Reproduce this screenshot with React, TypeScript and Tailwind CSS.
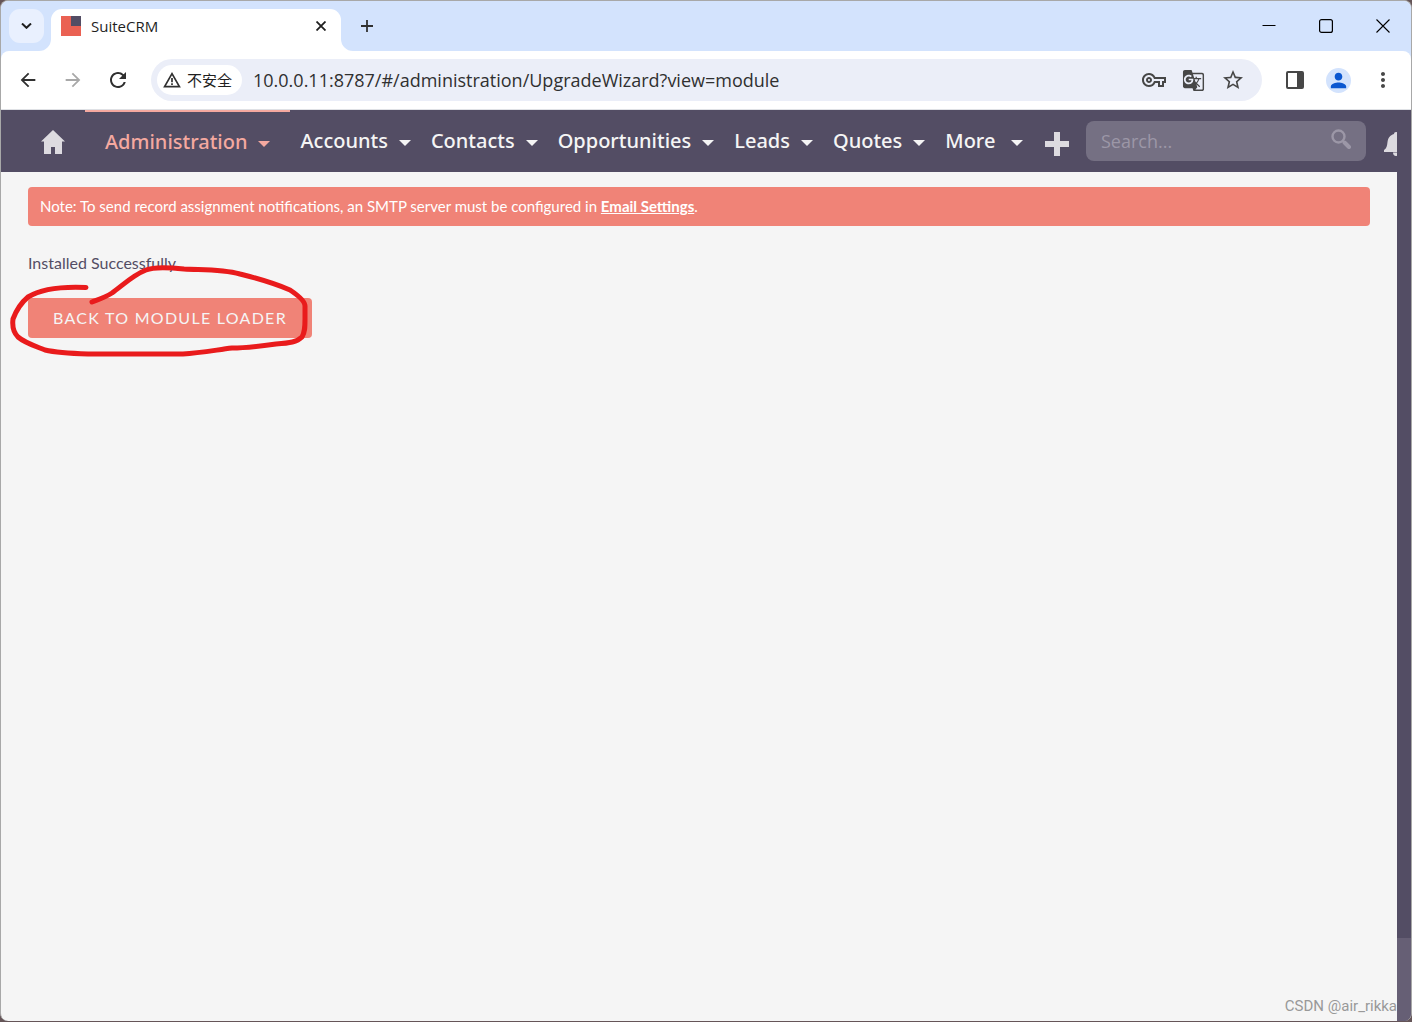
import {
  MdArrowBack,
  MdArrowForward,
  MdGTranslate,
  MdMoreVert,
  MdOutlineVpnKey,
  MdPerson,
  MdRefresh,
  MdStarBorder,
} from "react-icons/md"

const modules = ["Accounts", "Contacts", "Opportunities", "Leads", "Quotes"]

function Caret() {
  return (
    <svg className="mt-1 h-[6px] w-[12px] shrink-0" viewBox="0 0 12 6" fill="currentColor">
      <path d="M0 0h12L6 6z" />
    </svg>
  )
}

function TabStrip() {
  return (
    <div className="flex h-[50px] items-start bg-[#d3e3fd] pl-2 pt-2">
      <button
        aria-label="Search tabs"
        className="flex h-[34px] w-[35px] items-center justify-center rounded-[11px] bg-[#e9f0fe]"
      >
        <svg className="h-[6px] w-[11px]" viewBox="0 0 11 6" fill="none" stroke="#1f1f1f" strokeWidth="2">
          <path d="M1 0.5l4.5 4.3L10 0.5" />
        </svg>
      </button>
      <div className="relative ml-[7px] flex h-[42px] w-[290px] items-center rounded-t-[11px] bg-white pb-2 pl-[10px] pr-[15px]">
        <svg className="absolute -left-3 bottom-0 h-3 w-3" viewBox="0 0 12 12" fill="#fff">
          <path d="M12 0v12H0A12 12 0 0 0 12 0z" />
        </svg>
        <svg className="absolute -right-3 bottom-0 h-3 w-3" viewBox="0 0 12 12" fill="#fff">
          <path d="M0 0v12h12A12 12 0 0 1 0 0z" />
        </svg>
        <svg className="h-5 w-5" viewBox="0 0 20 20">
          <path fill="#ea6153" d="M0 0h20v20H0z" />
          <path fill="#534d64" d="M10 0h10v10H10z" />
        </svg>
        <span className="ml-[10px] text-[15px] leading-5 text-[#1f1f1f]">SuiteCRM</span>
        <button aria-label="Close tab" className="ml-auto">
          <svg className="h-[10px] w-[10px]" viewBox="0 0 10 10" stroke="#1f1f1f" strokeWidth="1.8">
            <path d="M0.5 0.5l9 9M9.5 0.5l-9 9" />
          </svg>
        </button>
      </div>
      <button aria-label="New tab" className="ml-5 mt-[11px]">
        <svg className="h-3 w-3" viewBox="0 0 12 12" stroke="#303030" strokeWidth="1.8">
          <path d="M6 0v12M0 6h12" />
        </svg>
      </button>
      <div className="ml-auto flex h-[34px] items-center gap-[43px] pr-[21px] text-black">
        <button aria-label="Minimize">
          <svg className="h-[14px] w-[14px]" viewBox="0 0 14 14" stroke="currentColor">
            <path d="M0.5 6.5h13" />
          </svg>
        </button>
        <button aria-label="Maximize">
          <svg className="h-[14px] w-[14px]" viewBox="0 0 14 14" fill="none" stroke="currentColor" strokeWidth="1.2">
            <rect x="0.6" y="0.6" width="12.8" height="12.8" rx="2" />
          </svg>
        </button>
        <button aria-label="Close window">
          <svg className="h-[14px] w-[14px]" viewBox="0 0 14 14" stroke="currentColor" strokeWidth="1.1">
            <path d="M0.5 0.5l13 13M13.5 0.5l-13 13" />
          </svg>
        </button>
      </div>
    </div>
  )
}

function AddressBar() {
  return (
    <div className="bg-[#d3e3fd]">
      <div className="flex h-[59px] items-center rounded-t-lg border-b border-[#dfe1e5] bg-white px-4 text-[#474747]">
        <button aria-label="Back">
          <MdArrowBack className="h-[22px] w-[22px] text-[#303030]" />
        </button>
        <button aria-label="Forward" className="ml-[23px]">
          <MdArrowForward className="h-[22px] w-[22px] text-[#a8a8a8]" />
        </button>
        <button aria-label="Reload" className="ml-[22px]">
          <MdRefresh className="h-6 w-6 text-[#303030]" />
        </button>
        <div className="ml-[21px] flex h-[42px] flex-1 items-center rounded-full bg-[#ebeef8] pl-[6px] pr-[17px]">
          <button className="flex h-[30px] w-[85px] shrink-0 items-center rounded-full bg-white pl-[6px] text-[#1f1f1f]">
            <svg className="h-4 w-[18px]" viewBox="0 0 18 16" fill="none" stroke="#303030" strokeWidth="1.7">
              <path d="M9 1.7L16.4 14.6H1.6z" />
              <path d="M9 6v4.2M9 11.3v1.7" />
            </svg>
            <span className="ml-[6px] font-['Noto_Sans_CJK_SC',sans-serif] text-[15px] leading-5">不安全</span>
          </button>
          <input
            aria-label="Address"
            className="ml-[11px] min-w-0 flex-1 bg-transparent text-lg leading-6 text-[#303030] outline-none"
            defaultValue="10.0.0.11:8787/#/administration/UpgradeWizard?view=module"
          />
          <div className="flex items-center gap-4">
            <button aria-label="Passwords">
              <MdOutlineVpnKey className="h-6 w-6" />
            </button>
            <button aria-label="Translate">
              <MdGTranslate className="h-[23px] w-[23px]" />
            </button>
            <button aria-label="Bookmark">
              <MdStarBorder className="h-6 w-6" />
            </button>
          </div>
        </div>
        <button aria-label="Side panel" className="ml-6">
          <svg className="h-[18px] w-[18px]" viewBox="0 0 18 18">
            <rect x="1" y="1" width="16" height="16" rx="1" fill="none" stroke="#474747" strokeWidth="2" />
            <path fill="#474747" d="M11 1h6v16h-6z" />
          </svg>
        </button>
        <button
          aria-label="Profile"
          className="ml-[22px] flex h-[25px] w-[25px] items-center justify-center rounded-full bg-[#d3e3fd]"
        >
          <MdPerson className="h-[23px] w-[23px] text-[#0b57d0]" />
        </button>
        <button aria-label="Menu" className="ml-5">
          <MdMoreVert className="h-6 w-6" />
        </button>
      </div>
    </div>
  )
}

function ModuleNav() {
  return (
    <nav className="flex h-[62px] items-stretch overflow-hidden bg-[#534d64] font-['Noto_Sans',sans-serif] text-xl font-medium text-[#f5f5f5]">
      <a href="#home" aria-label="Home" className="ml-10 flex items-center pt-[2px]">
        <svg className="h-6 w-6" viewBox="0 0 24 24" fill="#dddbe0">
          <path d="M12 0l12 11.5h-3V24h-7v-7h-4v7H3V11.5H0z" />
        </svg>
      </a>
      <a
        href="#administration"
        className="ml-5 flex items-center gap-[11px] border-t-2 border-[#f5a9a0] px-5 text-[#f5a9a0]"
      >
        Administration
        <Caret />
      </a>
      {modules.map((name) => (
        <a key={name} href={`#${name.toLowerCase()}`} className="flex items-center gap-[11px] px-[10px]">
          {name}
          <Caret />
        </a>
      ))}
      <button className="flex items-center gap-4 px-[10px]">
        More
        <Caret />
      </button>
      <button aria-label="Quick create" className="ml-3 flex items-center pt-[6px]">
        <svg className="h-6 w-6" viewBox="0 0 24 24" fill="#dddbe0">
          <path d="M9 0h6v9h9v6h-9v9H9v-9H0V9h9z" />
        </svg>
      </button>
      <label className="ml-auto mr-[18px] flex h-10 w-[280px] shrink-0 items-center self-center rounded-lg bg-[#757083] px-[15px]">
        <input
          type="text"
          aria-label="Search"
          placeholder="Search..."
          className="min-w-0 flex-1 bg-transparent font-['Open_Sans',sans-serif] text-lg font-normal outline-none placeholder:text-[#9c97a7]"
        />
        <svg className="mb-1 h-5 w-5" viewBox="0 0 20 20" fill="none" stroke="#9c97a7">
          <circle cx="7.5" cy="7.5" r="6" strokeWidth="2.4" />
          <path d="M13.5 13.5l4.5 4.5" strokeWidth="4" strokeLinecap="round" />
        </svg>
      </label>
      <button aria-label="Notifications" className="mr-[14px] flex w-[13px] items-center overflow-hidden pt-[6px]">
        <svg className="h-6 w-6 shrink-0" viewBox="0 0 24 24" fill="#dddbe0">
          <path d="M12 0c1.2 0 2 .8 2 1.900C18 3 20 6 20.500 10c.4 4 1 6.500 3.500 8v2H0v-2c2.500-1.500 3.100-4 3.500-8C4 6 6 3 10 1.900 10 .8 10.800 0 12 0zM9 20.500h6c0 2-1.200 3.500-3 3.500s-3-1.500-3-3.500z" />
        </svg>
      </button>
    </nav>
  )
}

// Freehand pen stroke drawn around the button
function PenCircle() {
  return (
    <svg
      className="pointer-events-none absolute -left-5 -top-9 h-[100px] w-[320px]"
      viewBox="0 0 320 100"
      fill="none"
      stroke="#e91b1c"
      strokeWidth="5"
      strokeLinecap="round"
      strokeLinejoin="round"
    >
      <path d="M78 25.500C56 24.500 33 27 20 35C14 40 8 49 5 57C4 65 5 70 10 75C17 81 27 84 37 88C50 91 65 91.500 80 92H175C192 91 208 88 224 86C240 86 254 84 268 82C282 81 289 80 294 75C297 70 297 65 297 57V44C297 39 291 34 282 28C268 22 252 17 232 12C214 7 195 8 176 7C162 5.500 145 5 138 8C125 13 115 23 104 31C96 36 89 38 84 40" />
    </svg>
  )
}

export default function App() {
  return (
    <div className="flex min-h-screen flex-col bg-[#655558] pb-px font-['Open_Sans',sans-serif]">
      <div className="flex flex-1 flex-col overflow-hidden rounded-lg border border-b-0 border-[#a8a8a8] bg-[#f5f5f5]">
        <TabStrip />
        <AddressBar />
        <ModuleNav />
        <div className="flex flex-1">
          <main className="relative flex-1 px-[27px] pt-[15px] font-['Lato',sans-serif]">
            <div className="rounded bg-[#f08377] px-3 py-2 text-[15px] leading-[23px] text-white">
              Note: To send record assignment notifications, an SMTP server must be configured in{" "}
              <a href="#email-settings" className="font-bold underline">
                Email Settings
              </a>
              .
            </div>
            <p className="mt-[25px] text-base leading-6 text-[#534d64]">Installed Successfully</p>
            <div className="relative mt-[23px]">
              <button className="h-10 rounded bg-[#f08377] px-[25px] text-base uppercase tracking-[0.08em] text-[#f5f5f5]">
                Back to module loader
              </button>
              <PenCircle />
            </div>
            <span className="absolute bottom-[5px] right-0 font-['Roboto',sans-serif] text-[15px] leading-5 text-[#999]">
              CSDN @air_rikka
            </span>
          </main>
          <div className="flex w-[14px] flex-col justify-end bg-[#534d64]">
            <div className="h-[83px] bg-[#665f75]" />
          </div>
        </div>
      </div>
    </div>
  )
}
